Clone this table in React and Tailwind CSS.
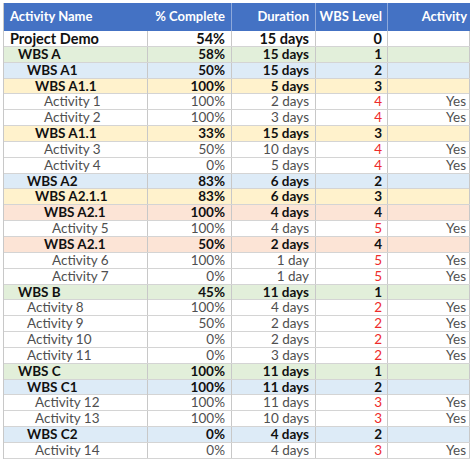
const rows = [
  ['Project Demo', '54%', '15 days', 0, '', 'top', 0],
  ['WBS A', '58%', '15 days', 1, '', 'green', 1],
  ['WBS A1', '50%', '15 days', 2, '', 'blue', 2],
  ['WBS A1.1', '100%', '5 days', 3, '', 'yellow', 3],
  ['Activity 1', '100%', '2 days', 4, 'Yes', 'act', 4],
  ['Activity 2', '100%', '3 days', 4, 'Yes', 'act', 4],
  ['WBS A1.1', '33%', '15 days', 3, '', 'yellow', 3],
  ['Activity 3', '50%', '10 days', 4, 'Yes', 'act', 4],
  ['Activity 4', '0%', '5 days', 4, 'Yes', 'act', 4],
  ['WBS A2', '83%', '6 days', 2, '', 'blue', 2],
  ['WBS A2.1.1', '83%', '6 days', 3, '', 'yellow', 3],
  ['WBS A2.1', '100%', '4 days', 4, '', 'salmon', 4],
  ['Activity 5', '100%', '4 days', 5, 'Yes', 'act', 5],
  ['WBS A2.1', '50%', '2 days', 4, '', 'salmon', 4],
  ['Activity 6', '100%', '1 day', 5, 'Yes', 'act', 5],
  ['Activity 7', '0%', '1 day', 5, 'Yes', 'act', 5],
  ['WBS B', '45%', '11 days', 1, '', 'green', 1],
  ['Activity 8', '100%', '4 days', 2, 'Yes', 'act', 2],
  ['Activity 9', '50%', '2 days', 2, 'Yes', 'act', 2],
  ['Activity 10', '0%', '2 days', 2, 'Yes', 'act', 2],
  ['Activity 11', '0%', '3 days', 2, 'Yes', 'act', 2],
  ['WBS C', '100%', '11 days', 1, '', 'green', 1],
  ['WBS C1', '100%', '11 days', 2, '', 'blue', 2],
  ['Activity 12', '100%', '11 days', 3, 'Yes', 'act', 3],
  ['Activity 13', '100%', '10 days', 3, 'Yes', 'act', 3],
  ['WBS C2', '0%', '4 days', 2, '', 'blue', 2],
  ['Activity 14', '0%', '4 days', 3, 'Yes', 'act', 3],
];

const rowBg = {
  top: 'bg-white',
  green: 'bg-[#e2efda]',
  blue: 'bg-[#ddebf7]',
  yellow: 'bg-[#fff2cc]',
  salmon: 'bg-[#fce4d6]',
  act: 'bg-white',
};

const indent = ['pl-[6px]', 'pl-[14px]', 'pl-[23px]', 'pl-[31px]', 'pl-[40px]', 'pl-[48px]'];

const cols = 'grid grid-cols-[144px_84px_84px_72px_82px]';

export default function App() {
  return (
    <div className="w-[474px] h-[462px] bg-white overflow-hidden pt-[3px] pl-[3px] font-['Lato',sans-serif]">
      <div className="border-l border-[#c8c8c8] w-[467px]">
        {/* header */}
        <div className={`${cols} h-[28px] bg-[#4472c4] text-white font-bold text-[13px] items-center`}>
          <div className="pl-[6px]">Activity Name</div>
          <div className="text-right pr-[6px] h-full flex items-center justify-end border-r border-[#8ea9db]">% Complete</div>
          <div className="text-right pr-[6px] h-full flex items-center justify-end border-r border-[#8ea9db]">Duration</div>
          <div className="text-right pr-[5px] h-full flex items-center justify-end border-r border-[#8ea9db]">WBS Level</div>
          <div className="text-right pr-[3px]">Activity</div>
        </div>

        {rows.map(([name, pct, dur, lvl, act, kind, ind], i) => {
          const bold = kind !== 'act';
          const txt = kind === 'act' ? 'text-[#4f4f4f] font-normal' : 'text-[#111] font-bold';
          const size = kind === 'top' ? 'text-[14.5px]' : 'text-[13.5px]';
          const lvlColor = kind === 'act' ? 'text-[#ee2b2b]' : '';
          return (
            <div key={i} className={`${cols} h-[15.85px] leading-[15px] ${rowBg[kind]} ${txt} ${size} border-b border-[#d4d4d4]`}>
              <div className={`${indent[ind]} border-r border-[#c8c8c8] whitespace-nowrap`}>{name}</div>
              <div className="text-right pr-[6px] border-r border-[#c8c8c8]">{pct}</div>
              <div className="text-right pr-[6px] border-r border-[#c8c8c8]">{dur}</div>
              <div className={`text-right pr-[5px] border-r border-[#c8c8c8] ${lvlColor} ${bold ? 'font-bold' : ''}`}>{lvl}</div>
              <div className="text-right pr-[3px] border-r border-[#c8c8c8]">{act}</div>
            </div>
          );
        })}
      </div>
    </div>
  );
}
